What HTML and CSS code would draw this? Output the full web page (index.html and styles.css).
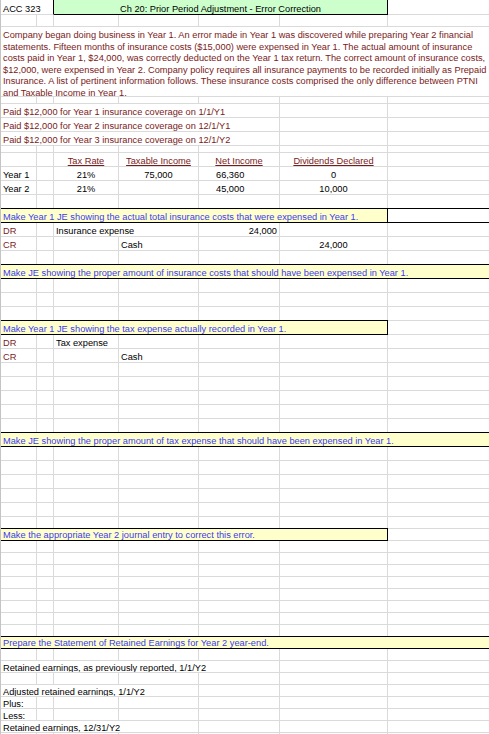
FILE: index.html
```html
<!DOCTYPE html>
<html>
<head>
<meta charset="utf-8">
<link rel="stylesheet" href="styles.css">
</head>
<body>
<div class="sheet">
  <div class="r h15">
    <div class="s2 bk">ACC 323</div>
    <div class="s4 green">Ch 20: Prior Period Adjustment - Error Correction</div>
    <div></div>
  </div>
  <div class="r t"><div></div><div></div><div></div><div></div><div></div><div></div><div></div></div>
  <div class="r block">
    <div class="s7 para mr">Company began doing business in Year 1. An error made in Year 1 was discovered while preparing Year 2 financial<br>statements. Fifteen months of insurance costs ($15,000) were expensed in Year 1. The actual amount of insurance<br>costs paid in Year 1, $24,000, was correctly deducted on the Year 1 tax return. The correct amount of insurance costs,<br>$12,000, were expensed in Year 2. Company policy requires all insurance payments to be recorded initially as Prepaid<br>Insurance. A list of pertinent information follows. These insurance costs comprised the only difference between PTNI<br>and Taxable Income in Year 1.</div>
  </div>
  <div class="r h7"><div></div><div></div><div></div><div></div><div></div><div></div><div></div></div>
  <div class="r"><div class="s5 mr">Paid $12,000 for Year 1 insurance coverage on 1/1/Y1</div><div></div><div></div></div>
  <div class="r"><div class="s5 mr">Paid $12,000 for Year 2 insurance coverage on 12/1/Y1</div><div></div><div></div></div>
  <div class="r"><div class="s5 mr">Paid $12,000 for Year 3 insurance coverage on 12/1/Y2</div><div></div><div></div></div>
  <div class="r h7"><div></div><div></div><div></div><div></div><div></div><div></div><div></div></div>
  <div class="r">
    <div></div><div></div>
    <div class="c mr"><u>Tax Rate</u></div>
    <div class="c mr"><u>Taxable Income</u></div>
    <div class="c mr"><u>Net Income</u></div>
    <div class="c mr"><u>Dividends Declared</u></div>
    <div></div>
  </div>
  <div class="r">
    <div>Year 1</div><div></div>
    <div class="c">21%</div>
    <div class="c">75,000</div>
    <div class="ni">66,360</div>
    <div class="c">0</div>
    <div></div>
  </div>
  <div class="r">
    <div>Year 2</div><div></div>
    <div class="c">21%</div>
    <div></div>
    <div class="ni">45,000</div>
    <div class="c">10,000</div>
    <div></div>
  </div>
  <div class="r"><div></div><div></div><div></div><div></div><div></div><div></div><div></div></div>
  <div class="r y">
    <div class="s6 yl">Make Year 1 JE showing the actual total insurance costs that were expensed in Year 1.</div>
    <div class="bk"></div>
  </div>
  <div class="r">
    <div class="mr">DR</div><div></div>
    <div class="s2">Insurance expense</div>
    <div class="rt">24,000</div>
    <div></div><div></div>
  </div>
  <div class="r">
    <div class="mr">CR</div><div></div><div></div>
    <div>Cash</div>
    <div></div>
    <div class="c">24,000</div>
    <div></div>
  </div>
  <div class="r"><div></div><div></div><div></div><div></div><div></div><div></div><div></div></div>
  <div class="r y">
    <div class="s7 yl full">Make JE showing the proper amount of insurance costs that should have been expensed in Year 1.</div>
  </div>
  <div class="r"><div></div><div></div><div></div><div></div><div></div><div></div><div></div></div>
  <div class="r"><div></div><div></div><div></div><div></div><div></div><div></div><div></div></div>
  <div class="r"><div></div><div></div><div></div><div></div><div></div><div></div><div></div></div>
  <div class="r y">
    <div class="s6 yl">Make Year 1 JE showing the tax expense actually recorded in Year 1.</div>
    <div class="gr"></div>
  </div>
  <div class="r">
    <div class="mr">DR</div><div></div>
    <div>Tax expense</div>
    <div></div><div></div><div></div><div></div>
  </div>
  <div class="r">
    <div class="mr">CR</div><div></div><div></div>
    <div>Cash</div>
    <div></div><div></div><div></div>
  </div>
  <div class="r"><div></div><div></div><div></div><div></div><div></div><div></div><div></div></div>
  <div class="r"><div></div><div></div><div></div><div></div><div></div><div></div><div></div></div>
  <div class="r"><div></div><div></div><div></div><div></div><div></div><div></div><div></div></div>
  <div class="r"><div></div><div></div><div></div><div></div><div></div><div></div><div></div></div>
  <div class="r"><div></div><div></div><div></div><div></div><div></div><div></div><div></div></div>
  <div class="r y">
    <div class="s7 yl full">Make JE showing the proper amount of tax expense that should have been expensed in Year 1.</div>
  </div>
  <div class="r"><div></div><div></div><div></div><div></div><div></div><div></div><div></div></div>
  <div class="r"><div></div><div></div><div></div><div></div><div></div><div></div><div></div></div>
  <div class="r"><div></div><div></div><div></div><div></div><div></div><div></div><div></div></div>
  <div class="r"><div></div><div></div><div></div><div></div><div></div><div></div><div></div></div>
  <div class="r"><div></div><div></div><div></div><div></div><div></div><div></div><div></div></div>
  <div class="r t"><div></div><div></div><div></div><div></div><div></div><div></div><div></div></div>
  <div class="r y t">
    <div class="s6 yl">Make the appropriate Year 2 journal entry to correct this error.</div>
    <div class="gr"></div>
  </div>
  <div class="r t"><div></div><div></div><div></div><div></div><div></div><div></div><div></div></div>
  <div class="r t"><div></div><div></div><div></div><div></div><div></div><div></div><div></div></div>
  <div class="r t"><div></div><div></div><div></div><div></div><div></div><div></div><div></div></div>
  <div class="r t"><div></div><div></div><div></div><div></div><div></div><div></div><div></div></div>
  <div class="r t"><div></div><div></div><div></div><div></div><div></div><div></div><div></div></div>
  <div class="r t"><div></div><div></div><div></div><div></div><div></div><div></div><div></div></div>
  <div class="r t"><div></div><div></div><div></div><div></div><div></div><div></div><div></div></div>
  <div class="r t"><div></div><div></div><div></div><div></div><div></div><div></div><div></div></div>
  <div class="r y t">
    <div class="s7 yl full">Prepare the Statement of Retained Earnings for Year 2 year-end.</div>
  </div>
  <div class="r t"><div></div><div></div><div></div><div></div><div></div><div></div><div></div></div>
  <div class="r t lo"><div class="s5">Retained earnings, as previously reported, 1/1/Y2</div><div></div><div></div></div>
  <div class="r t"><div></div><div></div><div></div><div></div><div></div><div></div><div></div></div>
  <div class="r t lo"><div class="s4">Adjusted retained earnings, 1/1/Y2</div><div></div><div></div><div></div></div>
  <div class="r t lo"><div>Plus:</div><div></div><div></div><div></div><div></div><div></div><div></div></div>
  <div class="r t lo"><div><u>Less:</u></div><div></div><div></div><div></div><div></div><div></div><div></div></div>
  <div class="r t lo"><div class="s4">Retained earnings, 12/31/Y2</div><div></div><div></div><div></div></div>
  <div class="r t"><div></div><div></div><div></div><div></div><div></div><div></div><div></div></div>
</div>
</body>
</html>
```

FILE: styles.css
```css
html, body {
  margin: 0;
  padding: 0;
  background: #ffffff;
}
body {
  width: 489px;
  height: 734px;
  overflow: hidden;
  font-family: "Liberation Sans", Arial, sans-serif;
  font-size: 9.25px;
  color: #000000;
}
.sheet {
  border-left: 1px solid #c4c4c4;
  width: 488px;
}
.r {
  display: grid;
  grid-template-columns: 36px 17px 65px 80px 81px 108px 1fr;
  height: 14px;
}
.r > div {
  box-sizing: border-box;
  border-right: 1px solid #dadada;
  border-bottom: 1px solid #dadada;
  display: flex;
  align-items: flex-end;
  line-height: 9px;
  padding: 0 2px 0 2px;
  white-space: nowrap;
  overflow: hidden;
  min-width: 0;
}
.r > div:last-child {
  border-right: none;
}
.h15 { height: 15px; }
.h7 { height: 7px; }
.t { height: 12px; }
.lo > div { line-height: 7px; }
.block { height: 70px; }
.s2 { grid-column: span 2; }
.s4 { grid-column: span 4; }
.s5 { grid-column: span 5; }
.s6 { grid-column: span 6; }
.s7 { grid-column: span 7; }
.c { justify-content: center; }
.rt { justify-content: flex-end; }
.ni { padding-left: 17px !important; }
.mr { color: #7a1a1a; }
.r > div.bk { border-right-color: #000; }
.r > div.green {
  background: #ccffcc;
  justify-content: center;
  border-right: 1px solid #000;
  border-bottom: 1px solid #000;
}
.r > div.para {
  display: block;
  padding: 3px 2px 0 2px;
  line-height: 11.6px;
}
.r.y {
  height: 15px;
  margin-top: -1px;
}
.r.y.t { height: 13px; }
.r.y > div {
  border-top: 1px solid #000;
  border-bottom: 1px solid #000;
}
.r.y > div.gr {
  border-top-color: #dadada;
  border-bottom-color: #dadada;
}
.r > div.yl {
  background: #ffffcc;
  color: #3b3bf0;
  border-right: 1px solid #000;
}
.r > div.yl.full {
  border-right: none;
}
```
